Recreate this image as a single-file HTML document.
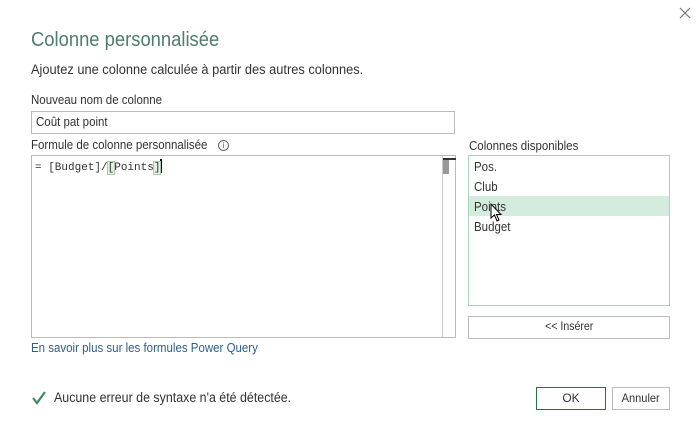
<!DOCTYPE html>
<html><head><meta charset="utf-8"><style>
*{margin:0;padding:0;box-sizing:border-box}
body{width:700px;height:439px;background:#fff;font-family:"Liberation Sans",sans-serif;color:#333;position:relative;overflow:hidden}
.a{position:absolute;white-space:nowrap}
.c{display:inline-block;transform:scaleX(0.92);transform-origin:left}
</style></head><body>
<svg class="a" style="left:679px;top:7px" width="12" height="12"><path d="M1 1L11 11M11 1L1 11" stroke="#777" stroke-width="1.2"/></svg>
<div class="a" style="left:31px;top:29px;font-size:20px;color:#4f7d6c"><span class="c">Colonne personnalisée</span></div>
<div class="a" style="left:31px;top:62px;font-size:13.5px;color:#333"><span class="c" style="transform:scaleX(0.95)">Ajoutez une colonne calculée à partir des autres colonnes.</span></div>
<div class="a" style="left:31px;top:93px;font-size:12.5px"><span class="c">Nouveau nom de colonne</span></div>
<div class="a" style="left:31px;top:111px;width:424px;height:23px;border:1px solid #bbb"></div>
<div class="a" style="left:36px;top:115px;font-size:12.5px"><span class="c">Coût pat point</span></div>
<div class="a" style="left:31px;top:138px;font-size:12.5px"><span class="c">Formule de colonne personnalisée</span></div>
<div class="a" style="left:218px;top:140px;width:11px;height:11px;border:1px solid #666;border-radius:50%;font-size:8px;line-height:9px;text-align:center;color:#555">i</div>
<div class="a" style="left:31px;top:155px;width:425px;height:183px;border:1px solid #bbb"></div>
<div class="a" style="left:442px;top:156px;width:1px;height:181px;background:#ccc"></div>
<div class="a" style="left:443px;top:158px;width:13px;height:2px;background:#333"></div>
<div class="a" style="left:443px;top:160px;width:6px;height:14px;background:#999"></div>
<div class="a" style="left:35px;top:159px;font-family:'Liberation Mono',monospace;font-size:11px;color:#333">= [Budget]/<span style="background:#e6efe6;outline:1px solid #aca">[</span>Points<span style="background:#e6efe6;outline:1px solid #aca">]</span><span style="display:inline-block;width:2px;height:14px;background:#000;vertical-align:-3px"></span></div>
<div class="a" style="left:469px;top:139px;font-size:12.5px"><span class="c">Colonnes disponibles</span></div>
<div class="a" style="left:468px;top:155px;width:202px;height:151px;border:1px solid #a8d4bd"></div>
<div class="a" style="left:469px;top:196px;width:200px;height:20px;background:#d3ecdd"></div>
<div class="a" style="left:474px;top:157px;font-size:12.5px;line-height:20px"><span class="c">Pos.<br>Club<br>Points<br>Budget</span></div>
<svg class="a" style="left:490px;top:203px" width="14" height="20"><path d="M1 1L1 15L4.5 12L7 18L9 17L6.5 11.5L11 11.5Z" fill="#fff" stroke="#000" stroke-width="1"/></svg>
<div class="a" style="left:468px;top:316px;width:202px;height:23px;border:1px solid #bbb;font-size:11.5px;text-align:center;line-height:21px"><span class="c" style="transform-origin:center">&lt;&lt; Insérer</span></div>
<div class="a" style="left:31px;top:341px;font-size:12.5px;color:#2e5f8a"><span class="c">En savoir plus sur les formules Power Query</span></div>
<svg class="a" style="left:31px;top:390px" width="16" height="16"><path d="M2 8L6 13L14 2" fill="none" stroke="#3d8a62" stroke-width="2.2"/></svg>
<div class="a" style="left:54px;top:390px;font-size:13.5px"><span class="c">Aucune erreur de syntaxe n'a été détectée.</span></div>
<div class="a" style="left:536px;top:387px;width:70px;height:23px;border:1px solid #217346;font-size:12px;text-align:center;line-height:21px">OK</div>
<div class="a" style="left:612px;top:387px;width:58px;height:23px;border:1px solid #bbb;font-size:12px;text-align:center;line-height:21px"><span class="c" style="transform-origin:center">Annuler</span></div>
</body></html>
